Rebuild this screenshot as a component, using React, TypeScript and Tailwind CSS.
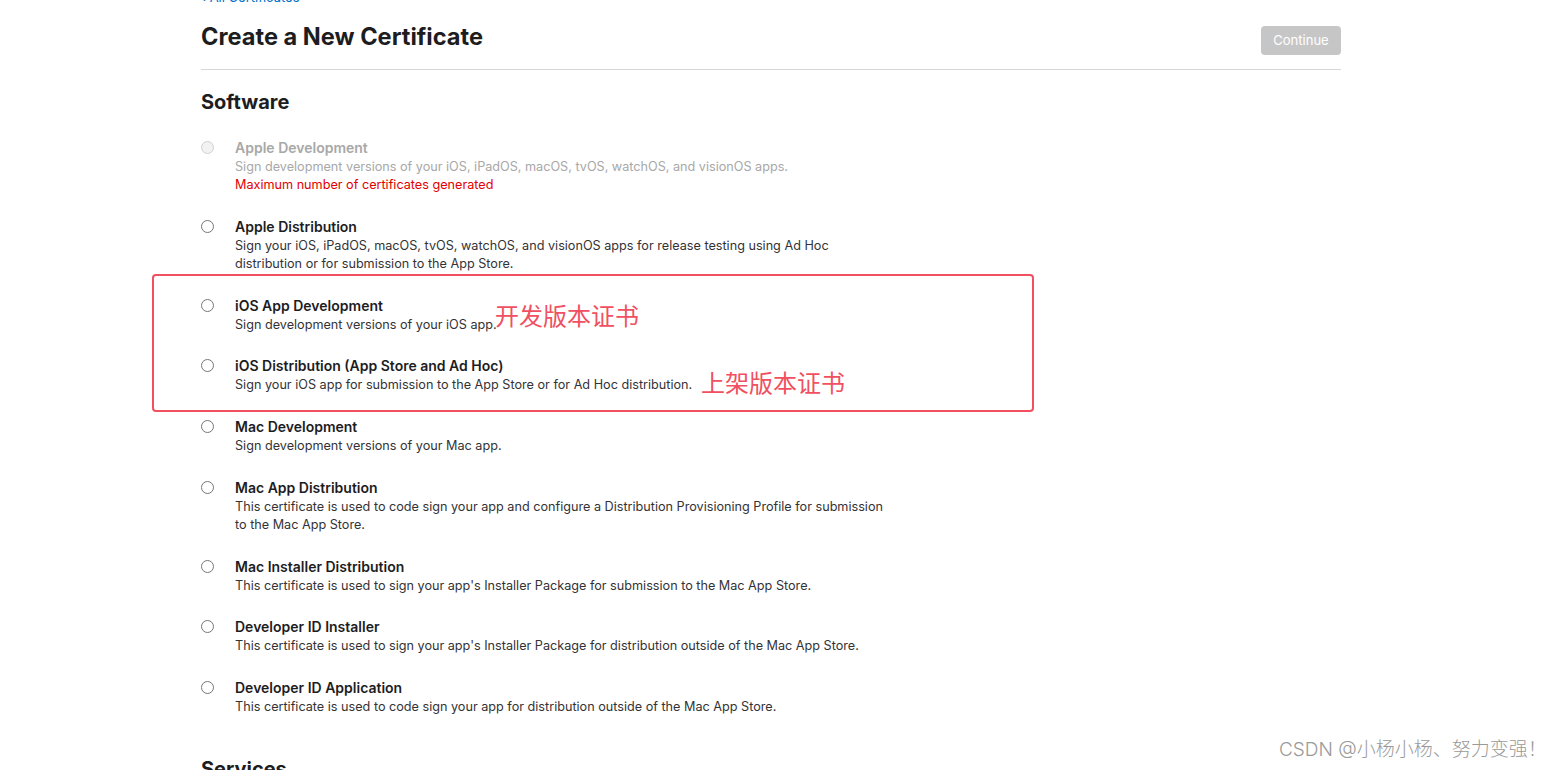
import React from 'react';

type Cert = {
  title: string;
  lines: string[];
  disabled?: boolean;
  note?: string;
};

const software: Cert[] = [
  {
    title: 'Apple Development',
    lines: ['Sign development versions of your iOS, iPadOS, macOS, tvOS, watchOS, and visionOS apps.'],
    disabled: true,
    note: 'Maximum number of certificates generated',
  },
  {
    title: 'Apple Distribution',
    lines: [
      'Sign your iOS, iPadOS, macOS, tvOS, watchOS, and visionOS apps for release testing using Ad Hoc',
      'distribution or for submission to the App Store.',
    ],
  },
  { title: 'iOS App Development', lines: ['Sign development versions of your iOS app.'] },
  {
    title: 'iOS Distribution (App Store and Ad Hoc)',
    lines: ['Sign your iOS app for submission to the App Store or for Ad Hoc distribution.'],
  },
  { title: 'Mac Development', lines: ['Sign development versions of your Mac app.'] },
  {
    title: 'Mac App Distribution',
    lines: [
      'This certificate is used to code sign your app and configure a Distribution Provisioning Profile for submission',
      'to the Mac App Store.',
    ],
  },
  {
    title: 'Mac Installer Distribution',
    lines: ["This certificate is used to sign your app's Installer Package for submission to the Mac App Store."],
  },
  {
    title: 'Developer ID Installer',
    lines: ["This certificate is used to sign your app's Installer Package for distribution outside of the Mac App Store."],
  },
  {
    title: 'Developer ID Application',
    lines: ['This certificate is used to code sign your app for distribution outside of the Mac App Store.'],
  },
];

const font = { fontFamily: 'Inter, "Noto Sans CJK SC", sans-serif' };

// one radio row: circle on the left, bold title and grey description on the right
const CertRow: React.FC<{ cert: Cert }> = ({ cert }) => (
  <label className="flex gap-[21px]">
    <span
      className={`mt-[3px] block h-[13px] w-[13px] shrink-0 rounded-full border ${
        cert.disabled ? 'border-[#d0d0d0] bg-[#f2f2f2]' : 'border-[#767676] bg-white'
      }`}
    />
    <div>
      <div className={`text-[14px] leading-[20px] font-semibold ${cert.disabled ? 'text-[#a8a8a8]' : 'text-[#1d1d1f]'}`}>
        {cert.title}
      </div>
      {cert.lines.map(l => (
        <div key={l} className={`text-[12.65px] leading-[18px] ${cert.disabled ? 'text-[#a8a8a8]' : 'text-[#333336]'}`}>
          {l}
        </div>
      ))}
      {cert.note && <div className="text-[12.65px] leading-[18px] text-[#e30000]">{cert.note}</div>}
    </div>
  </label>
);

export default function App() {
  return (
    <div className="relative h-[770px] w-full overflow-hidden bg-white" style={font}>
      <div className="ml-[201px] w-[1140px]">
        <div className="-mt-[12px] h-[18px] text-[13px] leading-[18px] text-[#0070c9]">‹ All Certificates</div>

        <div className="flex items-start justify-between">
          <h1 className="mt-[16px] text-[23.6px] leading-[30px] font-bold text-[#1d1d1f]">Create a New Certificate</h1>
          <button className="mt-[20px] h-[29px] w-[80px] rounded-[4px] bg-[#c6c6c6] text-[13px] text-white">Continue</button>
        </div>

        <div className="mt-[14px] h-px bg-[#d6d6d6]" />

        <h2 className="mt-[19px] text-[20px] leading-[26px] font-bold text-[#1d1d1f]">Software</h2>

        <div className="mt-[23px] flex flex-col gap-[22.75px]">
          {software.map(c => (
            <CertRow key={c.title} cert={c} />
          ))}
        </div>

        <h2 className="mt-10 text-[20px] leading-[26px] font-bold text-[#1d1d1f]">Services</h2>
      </div>

      {/* annotation overlay */}
      <div className="absolute left-[152px] top-[274px] h-[138px] w-[882px] rounded-[4px] border-2 border-[#f0505f]" />
      <div className="absolute left-[495px] top-[302px] text-[24px] leading-[30px] text-[#f0505f]">开发版本证书</div>
      <div className="absolute left-[701px] top-[369px] text-[24px] leading-[30px] text-[#f0505f]">上架版本证书</div>

      <div
        className="absolute left-[1279px] top-[737px] whitespace-nowrap text-[19px] leading-[26px] font-light text-[#9a9a9a]"
        style={{ textShadow: '0 0 1px #fff', fontFamily: 'Inter, "Noto Sans CJK SC", sans-serif' }}
      >
        CSDN @小杨小杨、努力变强！
      </div>
    </div>
  );
}
